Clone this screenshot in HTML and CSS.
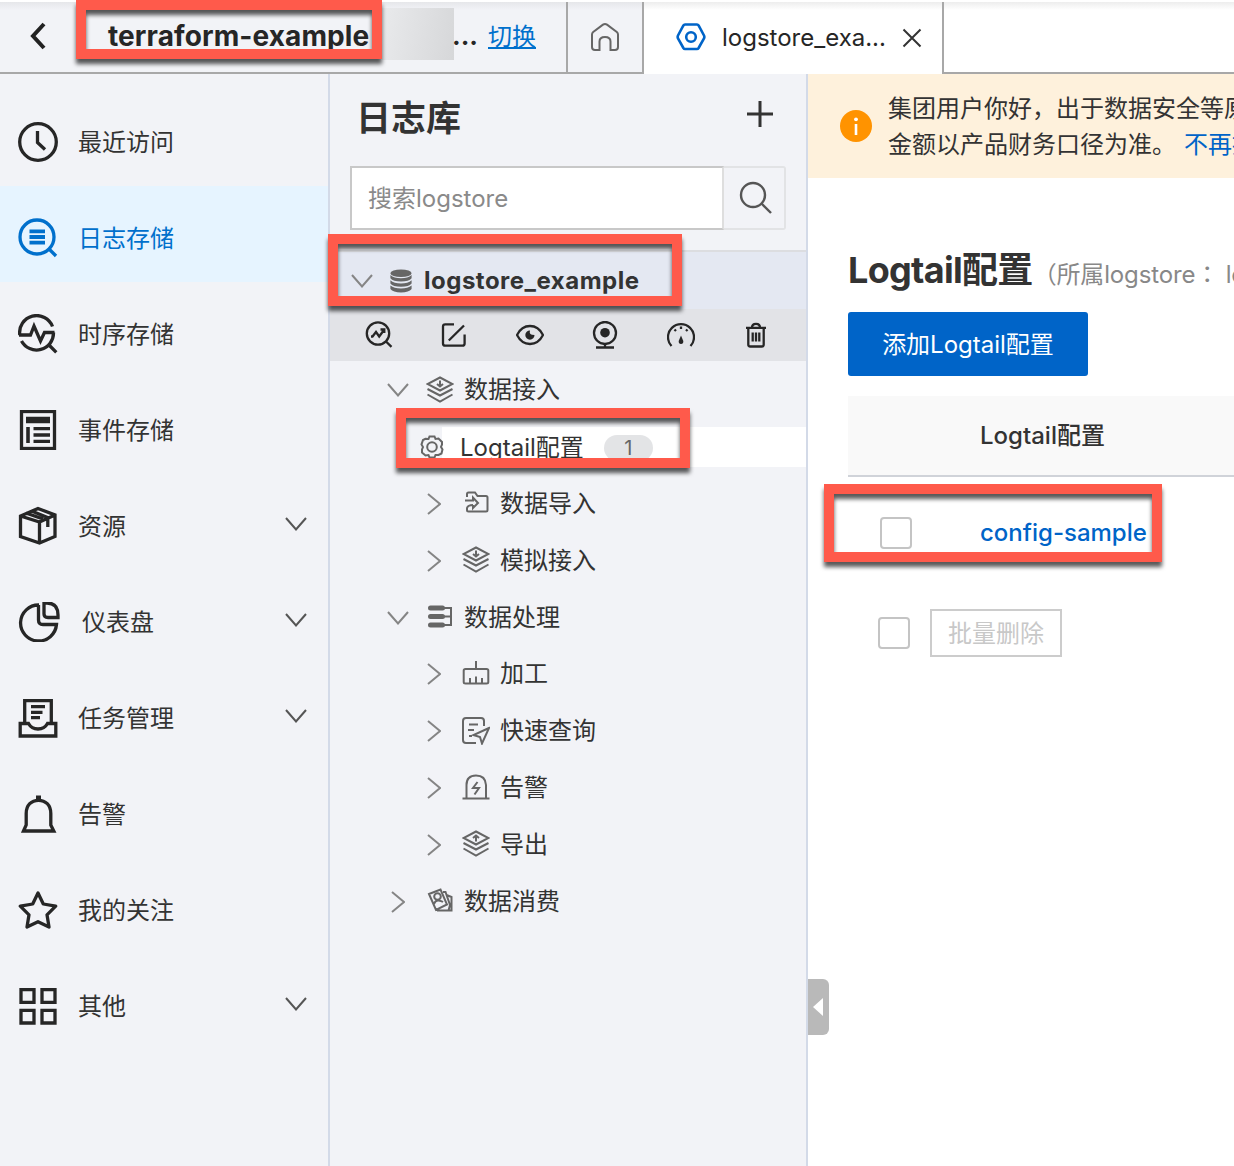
FILE: index.html
```
<!DOCTYPE html>
<html lang="zh-CN">
<head>
  <meta charset="UTF-8" />
  <meta name="viewport" content="width=device-width, initial-scale=1.0"/>
  <title>terraform-example - 日志库</title>
  <link rel="stylesheet" href="styles.css">
</head>
<body>

  <svg class="sprite">
    <symbol id="down" viewBox="0 0 22 14"><path d="M1 1 L11 12.5 L21 1"/></symbol>
    <symbol id="right" viewBox="0 0 14 22"><path d="M1 1 L13 11 L1 21"/></symbol>
    <symbol id="stack" viewBox="0 0 28 28"><path d="M14 1.5 L26.5 8 L14 14.5 L1.5 8 Z M1.5 13 L14 19.5 L26.5 13 M1.5 18.5 L14 25.5 L26.5 18.5"/></symbol>
  </svg>

  <header class="topbar">
    <div class="project">
      <svg class="back" width="18" height="28" viewBox="0 0 18 28"><path d="M16 2 L5 14 L16 26"/></svg>
      <strong class="project-name">terraform-example</strong>
      <span class="masked"></span>
      <strong class="dots">...</strong>
      <a class="switch" href="#">切换</a>
    </div>
    <div class="tab home">
      <svg width="30" height="30" viewBox="0 0 30 30"><path d="M2 12.5 Q2 11 3.2 10 L13 2.6 Q15 1.2 17 2.6 L26.8 10 Q28 11 28 12.5 V25 Q28 28 25 28 H20.5 V19.5 Q20.5 15 15 15 T9.5 19.5 V28 H5 Q2 28 2 25 Z"/></svg>
    </div>
    <div class="tab active">
      <svg class="hex" width="30" height="28" viewBox="0 0 30 28"><path d="M9 1.5 H21 Q22 1.5 22.6 2.5 L28 12.5 Q28.7 14 28 15.5 L22.6 25 Q22 26 21 26 H9 Q8 26 7.4 25 L2 15.5 Q1.3 14 2 12.5 L7.4 2.5 Q8 1.5 9 1.5 Z"/><circle cx="15" cy="14" r="4.8"/></svg>
      <span class="tab-label">logstore_exa...</span>
      <svg class="close" width="20" height="20" viewBox="0 0 20 20"><path d="M1.5 1.5 L18.5 18.5 M18.5 1.5 L1.5 18.5"/></svg>
    </div>
    <div class="tab-rest"></div>
  </header>

  <div class="layout">
    <nav class="sidebar">
      <a class="nav-item">
        <svg viewBox="0 0 40 40"><circle cx="20" cy="20" r="18.3"/><path d="M19.5 9 V20.5 L27 27.5"/></svg>
        <span>最近访问</span>
      </a>
      <a class="nav-item active">
        <svg viewBox="0 0 40 40"><circle cx="19" cy="19" r="17"/><path d="M31 31 L38 38"/><path d="M11.5 13.3 H27 M11.5 19 H27 M11.5 24.7 H27" stroke-width="3.8"/></svg>
        <span>日志存储</span>
      </a>
      <a class="nav-item">
        <svg viewBox="0 0 40 40"><path d="M1.8 21 A17 17 0 0 1 34.5 12.5 M3.5 27 A17 17 0 0 0 35.5 18.5 M31 31 L38.3 38.3"/><path d="M1 21 H12.5 L16 12 L22.5 27 L26.5 18.5 H36.5"/></svg>
        <span>时序存储</span>
      </a>
      <a class="nav-item">
        <svg viewBox="0 0 40 40"><rect x="3.5" y="1.5" width="33" height="37"/><path d="M8 10 H32" stroke-width="6.5"/><path d="M10 17 V33" stroke-width="3.6"/><path d="M15.5 18.7 H32 M15.5 25 H32 M15.5 31.4 H32"/></svg>
        <span>事件存储</span>
      </a>
      <a class="nav-item">
        <svg viewBox="0 0 40 40"><path d="M20 2.5 L37 9 V30.5 L21.5 37 L2.5 30.5 V10 Z M2.5 10 L21.5 16 L37 9 M21.5 16 V37 M8 7 L25 13 M13.5 5 L29.8 11.5 V21"/></svg>
        <span>资源</span>
        <svg class="chevron"><use href="#down"/></svg>
      </a>
      <a class="nav-item wide">
        <svg viewBox="0 0 44 40"><path d="M21 3 A18 18 0 1 0 38.5 22.5 H25 Q20.5 22.5 20.5 18 V3"/><path d="M26 1 H29 Q40 1 40 13 V15.5 H30 Q26 15.5 26 12 Z"/></svg>
        <span>仪表盘</span>
        <svg class="chevron"><use href="#down"/></svg>
      </a>
      <a class="nav-item">
        <svg viewBox="0 0 40 40"><path d="M6.7 24 V2.7 H33.3 V24 M2.2 25.5 H10.5 Q13.5 31 20 31 T29.5 25.5 H37.8 V38 H2.2 Z M13 8.7 H27 M13 14.4 H24.5 M13 19.6 H22"/></svg>
        <span>任务管理</span>
        <svg class="chevron"><use href="#down"/></svg>
      </a>
      <a class="nav-item">
        <svg viewBox="0 0 40 40"><path d="M5.5 37 L8.2 31 V19.5 C8.2 11 13.5 6.3 20.5 6.3 S32.8 11 32.8 19.5 V31 L35.8 37 Z"/><path d="M20.5 1.5 V6" stroke-width="5"/></svg>
        <span>告警</span>
      </a>
      <a class="nav-item">
        <svg viewBox="0 0 40 40"><path stroke-linejoin="round" d="M20 3 L25.3 14 L37.7 16.2 L29 24.8 L31 37 L20 31.7 L9 37 L11 24.8 L2.3 16.2 L14.7 14 Z"/></svg>
        <span>我的关注</span>
      </a>
      <a class="nav-item">
        <svg viewBox="0 0 40 40"><path d="M3 3.7 H16 V16.3 H3 Z M24 3.7 H37 V16.3 H24 Z M3 24.4 H16 V37 H3 Z M24 24.4 H37 V37 H24 Z"/></svg>
        <span>其他</span>
        <svg class="chevron"><use href="#down"/></svg>
      </a>
    </nav>

    <section class="panel">
      <div class="panel-head">
        <h2>日志库</h2>
        <svg width="28" height="28" viewBox="0 0 28 28"><path d="M14 1 V27 M1 14 H27"/></svg>
      </div>
      <div class="search">
        <input type="text" placeholder="搜索logstore">
        <button><svg width="34" height="34" viewBox="0 0 34 34"><circle cx="14" cy="14" r="12"/><path d="M22.5 22.5 L32 32"/></svg></button>
      </div>

      <div class="root">
        <span class="arrow"><svg class="chevron"><use href="#down"/></svg></span>
        <svg class="db" width="22" height="24" viewBox="0 0 22 24">
          <ellipse cx="11" cy="4.2" rx="10.6" ry="3.8"/>
          <path d="M.4 6 Q4 9.3 11 9.3 T21.6 6 V9.3 Q19 12.6 11 12.6 T.4 9.3 Z M.4 11.2 Q4 14.4 11 14.4 T21.6 11.2 V14.4 Q19 17.7 11 17.7 T.4 14.4 Z M.4 16.4 Q4 19.4 11 19.4 T21.6 16.4 V20 Q19 23.4 11 23.4 T.4 20 Z"/>
        </svg>
        <strong>logstore_example</strong>
      </div>

      <div class="tools">
        <svg viewBox="0 0 28 28"><circle cx="13" cy="12.5" r="11.2"/><path d="M21 20.5 L26.5 25.8 M6 15.5 H7.5 L11 11 L14.2 15.5 L19 9 M15.5 8.5 H19.3 V12"/></svg>
        <svg viewBox="0 0 28 28"><path d="M14 3.4 H5.2 Q3 3.4 3 5.6 V22.5 Q3 24.7 5.2 24.7 H22.4 Q24.6 24.7 24.6 22.5 V13.5 M8.8 19.5 L24 4.5"/></svg>
        <svg viewBox="0 0 28 28"><path d="M1 14 Q5.5 5 14 5 T27 14 Q22.5 23 14 23 T1 14 Z"/><path class="solid" d="M14 9.5 Q12.5 14 18.5 14 A4.6 4.6 0 1 1 14 9.5 Z"/></svg>
        <svg viewBox="0 0 28 28"><circle cx="14" cy="12" r="11"/><circle class="solid" cx="14" cy="11.7" r="4.8"/><path d="M14 23 V26.5 M5 26.5 H23"/></svg>
        <svg viewBox="0 0 28 28"><path d="M4.5 25 A13 13 0 1 1 23.5 25 M14 5.5 V8 M7.5 8.5 L9 10 M20.5 8.5 L19 10"/><path class="solid" d="M14 14.5 L16.3 20 Q16.5 23 14 23 T11.7 20 Z"/></svg>
        <svg viewBox="0 0 28 28"><path d="M4 6.8 H24 M6.3 7 V23.5 Q6.3 25.5 8.3 25.5 H19.7 Q21.7 25.5 21.7 23.5 V7 M10 6.5 Q10 2.8 14 2.8 T18 6.5 M10.7 11.5 V20.5 M14 11.5 V20.5 M17.3 11.5 V20.5"/></svg>
      </div>

      <div class="tree">
        <div class="row">
          <span class="arrow"><svg class="chevron"><use href="#down"/></svg></span>
          <svg class="icon" viewBox="0 0 28 28"><use href="#stack"/><path d="M14 4.5 V10 M11 8 L14 10.5 L17 8"/></svg>
          <span>数据接入</span>
        </div>
        <div class="row selected">
          <svg class="icon gear" viewBox="0 0 24 24"><path d="M9.5 1.5 H14.5 L15.5 4 L18.5 3.5 L22 7 V9.5 L21 12 L22.5 14.5 L21.5 18.5 L18.5 20 L15.5 20 L14.5 22.5 H9.5 L8.5 20 L5.5 20.5 L2 17.5 V14.5 L3 12 L1.5 9.5 L3 5 L5.5 3.8 L8.5 4 Z"/><circle cx="12" cy="12" r="4.8"/></svg>
          <div class="selected-body">
            <span>Logtail配置</span>
            <span class="badge">1</span>
          </div>
        </div>
        <div class="row sub">
          <span class="arrow"><svg class="chevron side"><use href="#right"/></svg></span>
          <svg class="icon" viewBox="0 0 28 28"><path d="M5 8 V5 Q5 3.5 6.5 3.5 H13 L15.5 7 H24 Q25.5 7 25.5 8.5 V21 Q25.5 22.5 24 22.5 H6.5 Q5 22.5 5 21 V19 Q6 16 11 16 M3 11.5 H11 V8.5 L16 14 L11 19 V16"/></svg>
          <span>数据导入</span>
        </div>
        <div class="row sub">
          <span class="arrow"><svg class="chevron side"><use href="#right"/></svg></span>
          <svg class="icon" viewBox="0 0 28 28"><use href="#stack"/><path d="M14 4.5 V10 M11 8 L14 10.5 L17 8"/></svg>
          <span>模拟接入</span>
        </div>
        <div class="row">
          <span class="arrow"><svg class="chevron"><use href="#down"/></svg></span>
          <svg class="icon" viewBox="0 0 28 28"><path d="M4.5 5 H16.5 M4.5 13.5 H16.5 M4.5 22 H16.5" stroke-width="5" stroke-linecap="round"/><path d="M18 5 H25 V22 H18 M18 13.5 H25"/></svg>
          <span>数据处理</span>
        </div>
        <div class="row sub">
          <span class="arrow"><svg class="chevron side"><use href="#right"/></svg></span>
          <svg class="icon" viewBox="0 0 28 28"><path d="M14 1 V9 M3.5 9 H24.5 Q26.3 9 26.3 10.5 V22 Q26.3 23.5 24.5 23.5 H3.5 Q1.7 23.5 1.7 22 V10.5 Q1.7 9 3.5 9 Z M8 23 V18 M14 23 V16.5 M20 23 V18"/></svg>
          <span>加工</span>
        </div>
        <div class="row sub">
          <span class="arrow"><svg class="chevron side"><use href="#right"/></svg></span>
          <svg class="icon" viewBox="0 0 28 28"><path d="M14 26 H4 Q1 26 1 23 V4 Q1 1 4 1 H19 Q22 1 22 4 V9 M7 7.5 H16 M6 13 H12 M7 19 H10 M27 11 L11.5 18 L18 20 L20 26.5 Z"/></svg>
          <span>快速查询</span>
        </div>
        <div class="row sub">
          <span class="arrow"><svg class="chevron side"><use href="#right"/></svg></span>
          <svg class="icon" viewBox="0 0 28 28"><path d="M.5 25.5 H27.5 M4.5 25 V12 Q4.5 2.5 14 2.5 T24 12 V25 M15.5 9 L11 15 H17 L12.5 21.5"/></svg>
          <span>告警</span>
        </div>
        <div class="row sub">
          <span class="arrow"><svg class="chevron side"><use href="#right"/></svg></span>
          <svg class="icon" viewBox="0 0 28 28"><use href="#stack"/><path d="M14 11.5 V6 M11 8 L14 5.5 L17 8"/></svg>
          <span>导出</span>
        </div>
        <div class="row">
          <span class="arrow"><svg class="chevron side"><use href="#right"/></svg></span>
          <svg class="icon" viewBox="0 0 28 28"><path d="M3 7 L14.5 2.5 L21 17.5 L10 23 Z M17 5 H19.5 L24 18 L22.5 23.5 H11 M20.5 8 L25.5 10 V23.5 H13 M8 17 Q9.5 13 12.5 13.5 T17 15"/><circle cx="11.5" cy="9.5" r="3.3"/></svg>
          <span>数据消费</span>
        </div>
      </div>
    </section>

    <main class="content">
      <div class="notice">
        <svg width="32" height="32" viewBox="0 0 32 32"><circle cx="16" cy="16" r="16"/><circle class="mark" cx="16" cy="9.3" r="1.9"/><rect class="mark" x="14.7" y="14" width="2.6" height="11"/></svg>
        <p>集团用户你好，出于数据安全等原因<br>金额以产品财务口径为准。<a href="#">不再提示</a></p>
      </div>
      <button class="collapse"></button>
      <div class="page">
        <h1>Logtail配置<small>（所属logstore<span class="colon" lang="zh-TW">：</span> logstore_example）</small></h1>
        <button class="primary">添加Logtail配置</button>
        <div class="table-head">Logtail配置</div>
        <div class="table-row">
          <span class="checkbox"></span>
          <a href="#">config-sample</a>
        </div>
        <div class="batch">
          <span class="checkbox"></span>
          <button class="ghost" disabled>批量删除</button>
        </div>
      </div>
    </main>
  </div>

  <!-- highlight frames -->
  <div class="mark-box mark-project"></div>
  <div class="mark-box mark-logstore"></div>
  <div class="mark-box mark-logtail"></div>
  <div class="mark-box mark-config"></div>

</body>
</html>
```
FILE: styles.css
```
* {
  box-sizing: border-box;
}

html, body {
  margin: 0;
  padding: 0;
  height: 1166px;
  width: 1234px;
  overflow: hidden;
}

body {
  position: relative;
  font-family: Inter, 'Noto Sans CJK SC', sans-serif;
  font-size: 24px;
  line-height: 36px;
  color: #333;
  background: #fff;
}

a {
  color: #0064c8;
  text-decoration: none;
}

button, input {
  font: inherit;
}

svg {
  display: block;
  flex: none;
  fill: none;
  stroke: currentColor;
  stroke-width: 2;
}

.sprite {
  position: absolute;
  width: 0;
  height: 0;
}

/* top bar */
.topbar {
  display: flex;
  height: 74px;
  border-top: 2px solid #fff;
  white-space: nowrap;
  background: #fff;
}

.project {
  display: flex;
  align-items: center;
  width: 568px;
  padding-left: 28px;
  border-right: 2px solid #a8a8a8;
  border-bottom: 2px solid #a8a8a8;
  background: linear-gradient(#e6e7ea, #f2f3f7 8px);
}

.back {
  margin-top: -2px;
  color: #222;
  stroke-width: 4;
}

.project-name {
  width: 261px;
  margin-left: 62px;
  margin-top: -3px;
  font-size: 28px;
  letter-spacing: 0.1px;
  color: #262626;
}

.masked {
  width: 72px;
  height: 52px;
  margin-left: 13px;
  margin-top: -6px;
  background: linear-gradient(100deg, #e9eaec, #d6d7d9);
}

.dots {
  width: 24px;
  margin-left: -2px;
  margin-top: -3px;
  font-size: 26px;
  color: #262626;
}

.switch {
  margin-left: 12px;
  color: #0070cc;
  text-decoration: underline;
}

.tab {
  display: flex;
  align-items: center;
}

.home {
  width: 76px;
  padding-left: 22px;
  color: #666;
  border-right: 2px solid #a8a8a8;
  border-bottom: 2px solid #a8a8a8;
  background: linear-gradient(#e6e7ea, #f2f3f7 8px);
}

.active.tab {
  width: 300px;
  padding-left: 32px;
  border-right: 2px solid #a8a8a8;
  background: linear-gradient(#ededed, #fff 8px);
}

.active.tab .hex {
  margin-top: -3px;
  color: #0064c8;
  stroke-width: 2.6;
}

.tab-label {
  width: 163px;
  margin-left: 16px;
  color: #262626;
}

.active.tab .close {
  margin-left: 17px;
  color: #333;
  stroke-width: 2;
}

.tab-rest {
  flex: 1;
  border-bottom: 2px solid #a8a8a8;
  background: linear-gradient(#ededed, #fff 8px);
}

.layout {
  display: flex;
  height: 1092px;
}

/* left navigation */
.sidebar {
  width: 330px;
  padding-top: 16px;
  border-right: 2px solid #d3dae8;
  background: #f2f3f7;
}

.nav-item {
  display: flex;
  align-items: center;
  height: 96px;
  padding: 8px 21px 0 18px;
  color: #333;
}

.nav-item > svg:first-child {
  width: 40px;
  height: 40px;
  margin-right: 20px;
  color: #262626;
  stroke-width: 3.3;
}

.nav-item span {
  margin-top: 2px;
}

.nav-item.wide > svg:first-child {
  width: 44px;
}

.nav-item.active,
.nav-item.active > svg:first-child {
  color: #0070cc;
}

.nav-item.active {
  background: #e6f4ff;
}

.chevron {
  width: 22px;
  height: 14px;
  color: #858585;
}

.chevron.side {
  width: 14px;
  height: 22px;
}

.nav-item .chevron {
  margin-left: auto;
  margin-top: -4px;
  color: #555;
}

/* logstore panel */
.panel {
  width: 478px;
  border-right: 2px solid #d3dae8;
  background: #f2f3f7;
}

.panel-head {
  display: flex;
  justify-content: space-between;
  height: 92px;
  padding: 26px 32px 0 26px;
}

.panel-head h2 {
  margin: 0;
  font-size: 35px;
}

.panel-head svg {
  stroke-width: 3;
}

.search {
  display: flex;
  height: 64px;
  margin: 0 20px;
}

.search input {
  width: 374px;
  padding: 2px 16px 0;
  border: 2px solid #c8c8c8;
  border-right-color: #dedede;
  border-radius: 0;
  background: #fff;
}

.search input::placeholder {
  color: #8a8a8a;
}

.search button {
  display: flex;
  align-items: center;
  width: 62px;
  padding: 0 0 0 15px;
  border: 2px solid #e2e3e5;
  border-left: none;
  border-radius: 0 3px 3px 0;
  background: #f2f3f7;
  color: #555;
}

.search svg {
  stroke-width: 2.4;
}

.root {
  display: flex;
  align-items: center;
  height: 59px;
  margin-top: 20px;
  padding-left: 21px;
  border-top: 2px solid #dcdde0;
  background: #e4e8f2;
}

.root strong {
  letter-spacing: 0.5px;
}

.root .db {
  margin: 0 12px 0 17px;
  fill: #666;
  stroke: none;
}

.tools {
  display: flex;
  justify-content: space-between;
  align-items: center;
  height: 52px;
  padding: 0 36px 0 35px;
  background: #e2e3e7;
}

.tools svg {
  width: 28px;
  height: 28px;
  color: #262626;
  stroke-width: 2.3;
}

.tools .solid {
  fill: currentColor;
  stroke: none;
}

.tree {
  padding-top: 1px;
}

.row {
  display: flex;
  align-items: center;
  height: 56.8px;
  padding-left: 57px;
}

.row.sub {
  padding-left: 93px;
}

.arrow {
  display: flex;
  justify-content: center;
  width: 22px;
}

.row .icon {
  width: 28px;
  height: 28px;
  margin: -1px 10px 0 17px;
  color: #666;
}

.row.selected {
  padding-left: 90px;
}

.row .gear {
  width: 24px;
  height: 24px;
  margin: 0 -2px 0 0;
  z-index: 1;
}

.selected-body {
  display: flex;
  align-items: center;
  flex: 1;
  height: 40px;
  padding-top: 2px;
  padding-left: 18px;
  background: #fff;
}

.badge {
  width: 49px;
  height: 26px;
  margin-left: 20px;
  border-radius: 13px;
  font-size: 20px;
  line-height: 27px;
  text-align: center;
  color: #666;
  background: #e3e4e6;
}

/* main content */
.content {
  position: relative;
  width: 426px;
  overflow: hidden;
  white-space: nowrap;
}

.notice {
  display: flex;
  align-items: center;
  height: 104px;
  padding-left: 32px;
  background: #fef1dc;
}

.notice svg {
  fill: #ff9300;
  stroke: none;
}

.notice .mark {
  fill: #fff;
}

.notice p {
  margin: 2px 0 0 16px;
}

.notice a {
  margin-left: 8px;
}

.collapse {
  position: absolute;
  left: 0;
  top: 905px;
  width: 21px;
  height: 56px;
  padding: 0 0 0 5px;
  border: none;
  border-radius: 0 6px 6px 0;
  background: #b9b9b9;
}

.collapse::before {
  content: '';
  display: block;
  width: 0;
  border: 9px solid transparent;
  border-left: none;
  border-right: 10px solid #fff;
}

.page {
  padding: 70px 0 0 40px;
}

.page h1 {
  margin: 0;
  height: 64px;
  font-size: 36px;
  line-height: 44px;
  letter-spacing: -0.7px;
}

.page small {
  font-size: 24px;
  font-weight: normal;
  letter-spacing: -0.15px;
  color: #888;
}

.colon {
  font-family: 'Noto Sans CJK TC', sans-serif;
}

.primary {
  display: block;
  width: 240px;
  height: 64px;
  padding: 2px 0 0;
  border: none;
  border-radius: 3px;
  color: #fff;
  background: #0064c8;
}

.table-head {
  height: 81px;
  margin-top: 20px;
  padding-left: 132px;
  border-bottom: 2px solid #d0d3d9;
  font-weight: 500;
  line-height: 79px;
  background: #f9f9f9;
}

.table-row {
  display: flex;
  align-items: center;
  height: 112px;
  padding-left: 32px;
}

.table-row a {
  margin-left: 68px;
  font-weight: 500;
}

.checkbox {
  width: 32px;
  height: 32px;
  border: 2px solid #c4c4c4;
  border-radius: 4px;
  background: #fff;
}

.batch {
  display: flex;
  align-items: center;
  margin-top: 20px;
  padding-left: 30px;
}

.ghost {
  width: 132px;
  height: 48px;
  margin-left: 20px;
  padding: 2px 0 0;
  border: 2px solid #ccc;
  color: #c8c8c8;
  background: #fff;
}

/* red frames over the interface */
.mark-box {
  position: absolute;
  z-index: 5;
  border: 10px solid #ff5a4b;
  filter: drop-shadow(0 5px 2px rgba(0, 0, 0, 0.65));
}

.mark-project {
  left: 76px;
  top: 0;
  width: 306px;
  height: 59px;
}

.mark-logstore {
  left: 328px;
  top: 234px;
  width: 354px;
  height: 72px;
}

.mark-logtail {
  left: 396px;
  top: 408px;
  width: 294px;
  height: 60px;
}

.mark-config {
  left: 824px;
  top: 484px;
  width: 338px;
  height: 78px;
}
```
